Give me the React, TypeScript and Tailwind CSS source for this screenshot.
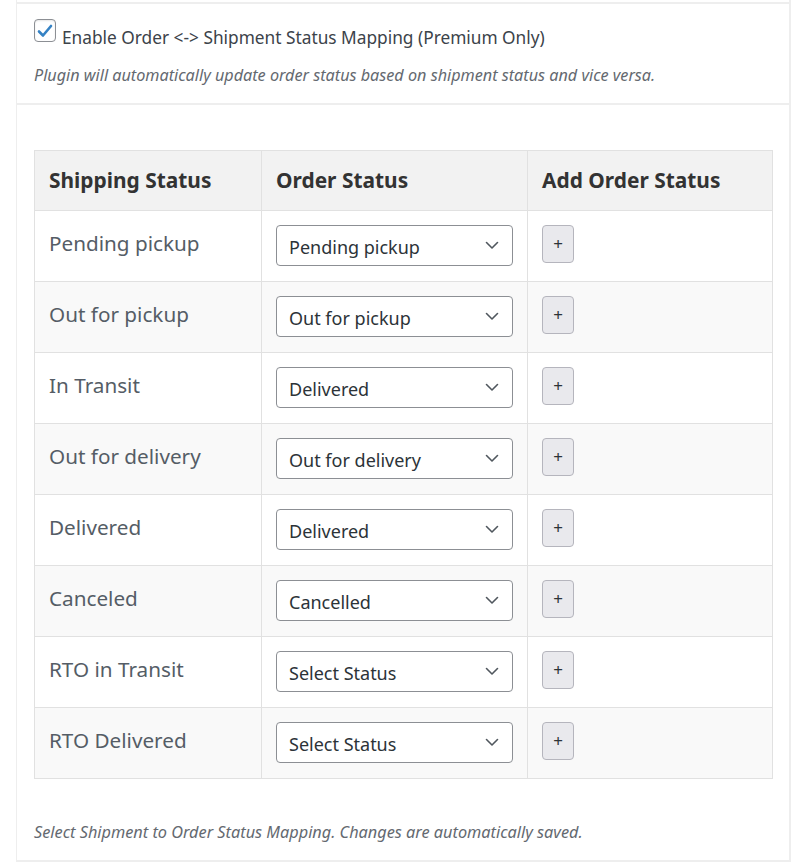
const rows = [
  { ship: "Pending pickup", order: "Pending pickup" },
  { ship: "Out for pickup", order: "Out for pickup" },
  { ship: "In Transit", order: "Delivered" },
  { ship: "Out for delivery", order: "Out for delivery" },
  { ship: "Delivered", order: "Delivered" },
  { ship: "Canceled", order: "Cancelled" },
  { ship: "RTO in Transit", order: "Select Status" },
  { ship: "RTO Delivered", order: "Select Status" },
];

const Chevron = () => (
  <svg width="14" height="9" viewBox="0 0 14 9" fill="none" className="shrink-0">
    <path d="M1.5 1.5L7 7L12.5 1.5" stroke="#50575e" strokeWidth="1.6" strokeLinecap="round" strokeLinejoin="round" />
  </svg>
);

const App = () => {
  return (
    <div className="min-h-[864px] bg-white font-['Noto_Sans',sans-serif] text-[#3c434a]">
      <div className="ml-4 w-[775px] pt-[2px] border-r-2 border-l border-[#eeeeee]">
        <div className="border-t-2 border-[#eeeeee] pl-[17px] pt-[15px] pb-[17px]">
          <label className="flex items-start gap-[6px] h-[23px]">
            <span className="w-[22px] h-[23px] shrink-0 rounded-[4px] border border-[#8c8f94] bg-white flex items-center justify-center shadow-[inset_0_1px_2px_rgba(0,0,0,0.1)]">
              <svg width="16" height="14" viewBox="0 0 16 14">
                <path d="M2 7.5L6 11.5L14 2" stroke="#3582c4" strokeWidth="2.6" fill="none" strokeLinecap="round" strokeLinejoin="round" />
              </svg>
            </span>
            <span className="text-[17.3px] leading-[24px] mt-[7px]">Enable Order &lt;-&gt; Shipment Status Mapping (Premium Only)</span>
          </label>
          <p className="mt-[22px] text-[16.2px] leading-[22px] italic text-[#646970]">
            Plugin will automatically update order status based on shipment status and vice versa.
          </p>
        </div>

        <div className="border-t-2 border-[#eeeeee] pl-[17px] pt-[45px]">
          <table className="w-[739px] border-collapse border border-[#e1e1e1]">
            <thead>
              <tr className="bg-[#f2f2f2] h-[60px]">
                <th className="w-[227px] border border-[#e1e1e1] px-[14px] text-left text-[20.9px] font-bold text-[#333333]">Shipping Status</th>
                <th className="w-[266px] border border-[#e1e1e1] px-[14px] text-left text-[20.9px] font-bold text-[#333333]">Order Status</th>
                <th className="border border-[#e1e1e1] px-[14px] text-left text-[20.9px] font-bold text-[#333333]">Add Order Status</th>
              </tr>
            </thead>
            <tbody>
              {rows.map((r, i) => (
                <tr key={r.ship} className={i % 2 === 1 ? "bg-[#f9f9f9] h-[70.75px]" : "bg-white h-[70.75px]"}>
                  <td className="border border-[#e1e1e1] px-[14px] pt-[18px] pb-[11px] align-top text-[20.7px] leading-[28px] text-[#555d66]">{r.ship}</td>
                  <td className="border border-[#e1e1e1] px-[14px] pt-[14px] pb-[15px] align-top">
                    <div className="h-[41px] w-[237px] rounded-[4px] border border-[#8c8f94] bg-white flex items-center justify-between pl-[12px] pr-[13px]">
                      <span className="text-[18px] mt-[3px] text-[#2c3338]">{r.order}</span>
                      <Chevron />
                    </div>
                  </td>
                  <td className="border border-[#e1e1e1] px-[14px] pt-[14px] pb-[15px] align-top">
                    <button className="h-[38px] w-[32px] rounded-[4px] border border-[#b5b5bd] bg-[#e9e9ed] text-[17px] text-[#2c3338] flex items-center justify-center">+</button>
                  </td>
                </tr>
              ))}
            </tbody>
          </table>
          <p className="mt-[42px] pb-[17px] text-[16.3px] leading-[22px] italic text-[#646970]">
            Select Shipment to Order Status Mapping. Changes are automatically saved.
          </p>
        </div>
        <div className="border-t-2 border-[#eeeeee]" />
      </div>
    </div>
  );
};

export default App;
